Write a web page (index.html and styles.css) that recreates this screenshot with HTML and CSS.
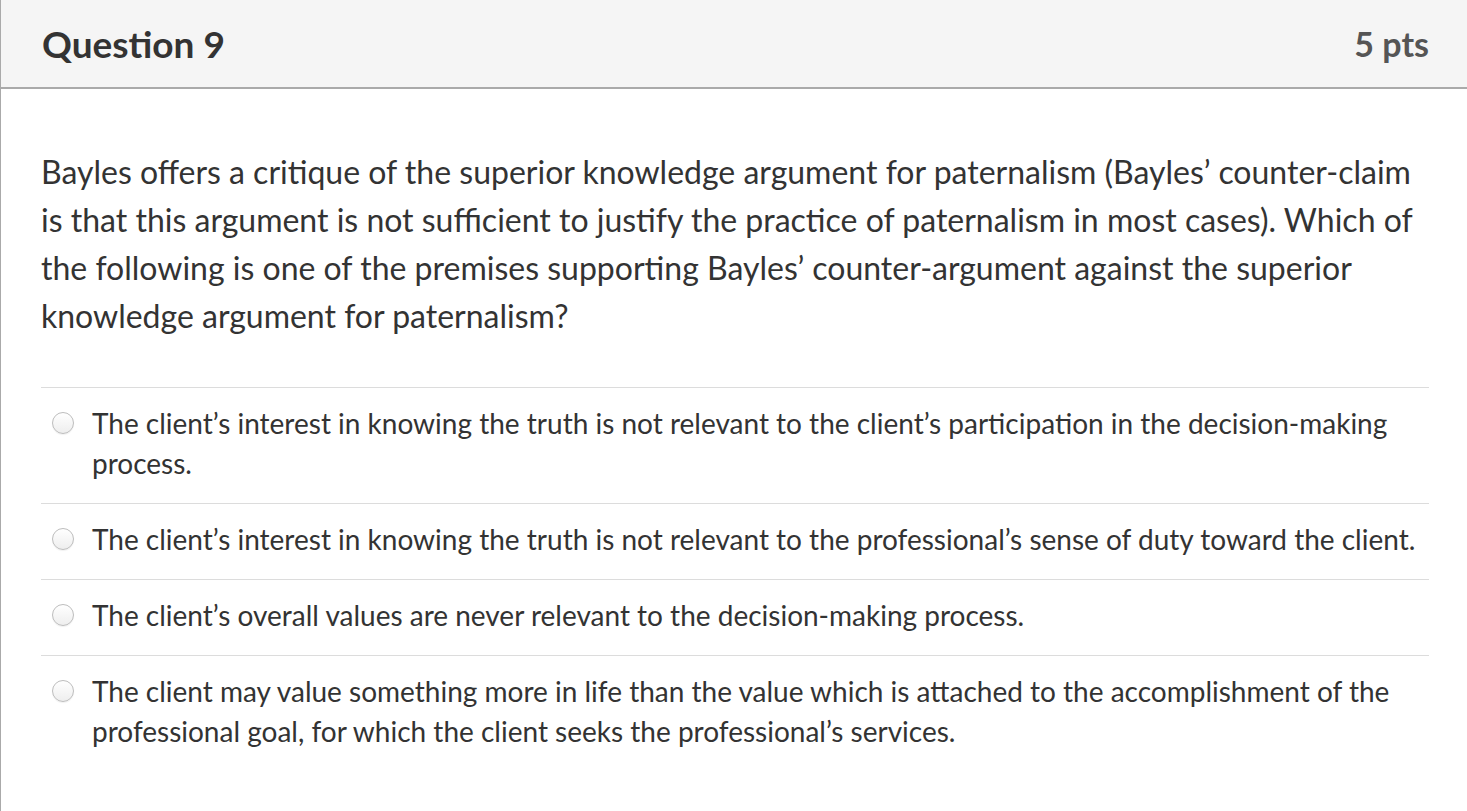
FILE: index.html
```html
<!DOCTYPE html>
<html>
<head>
<meta charset="utf-8">
<link rel="stylesheet" href="styles.css">
</head>
<body>
<div class="question">
  <div class="header">
    <h2 class="title">Question 9</h2>
    <div class="points">5 pts</div>
  </div>
  <div class="content">
    <p class="text">Bayles offers a critique of the superior knowledge argument for paternalism (Bayles’ counter-claim is that this argument is not sufficient to justify the practice of paternalism in most cases). Which of the following is one of the premises supporting Bayles’ counter-argument against the superior knowledge argument for paternalism?</p>
    <div class="answers">
      <div class="answer"><span class="radio"></span><span class="label">The client’s interest in knowing the truth is not relevant to the client’s participation in the decision-making process.</span></div>
      <div class="answer"><span class="radio"></span><span class="label">The client’s interest in knowing the truth is not relevant to the professional’s sense of duty toward the client.</span></div>
      <div class="answer"><span class="radio"></span><span class="label">The client’s overall values are never relevant to the decision-making process.</span></div>
      <div class="answer"><span class="radio"></span><span class="label">The client may value something more in life than the value which is attached to the accomplishment of the professional goal, for which the client seeks the professional’s services.</span></div>
    </div>
  </div>
</div>
</body>
</html>
```

FILE: styles.css
```css
html, body {
  margin: 0;
  padding: 0;
  background: #fff;
}
body {
  font-family: Lato, "Open Sans", sans-serif;
  color: #333;
  width: 1467px;
  height: 811px;
  overflow: hidden;
}
.question {
  border-left: 1px solid #aaaaaa;
  height: 811px;
  box-sizing: border-box;
}
.header {
  display: flex;
  justify-content: space-between;
  align-items: center;
  background: #f5f5f5;
  border-bottom: 2px solid #aaaaaa;
  height: 87px;
  padding: 0 38px 0 41px;
}
.title {
  margin: 0;
  font-size: 37px;
  font-weight: 700;
  color: #333;
}
.points {
  font-size: 34px;
  font-weight: 700;
  color: #555;
}
.content {
  padding: 59px 38px 0 40px;
}
.text {
  margin: 0 0 47px 0;
  font-size: 32px;
  line-height: 48px;
  color: #333;
}
.answers {
  border-top: 1px solid #dcdcdc;
}
.answer {
  display: flex;
  align-items: flex-start;
  padding: 15px 0 20px 0;
  border-bottom: 1px solid #dcdcdc;
}
.answer:last-child {
  border-bottom: none;
}
.radio {
  flex: none;
  width: 20px;
  height: 20px;
  margin: 9px 18px 0 11px;
  border: 1px solid #bdbdbd;
  border-radius: 50%;
  background: linear-gradient(#ffffff, #eeeeee);
  box-shadow: 0 1px 1px rgba(0,0,0,0.06);
}
.label {
  font-size: 28px;
  line-height: 40px;
  color: #333;
}
```
